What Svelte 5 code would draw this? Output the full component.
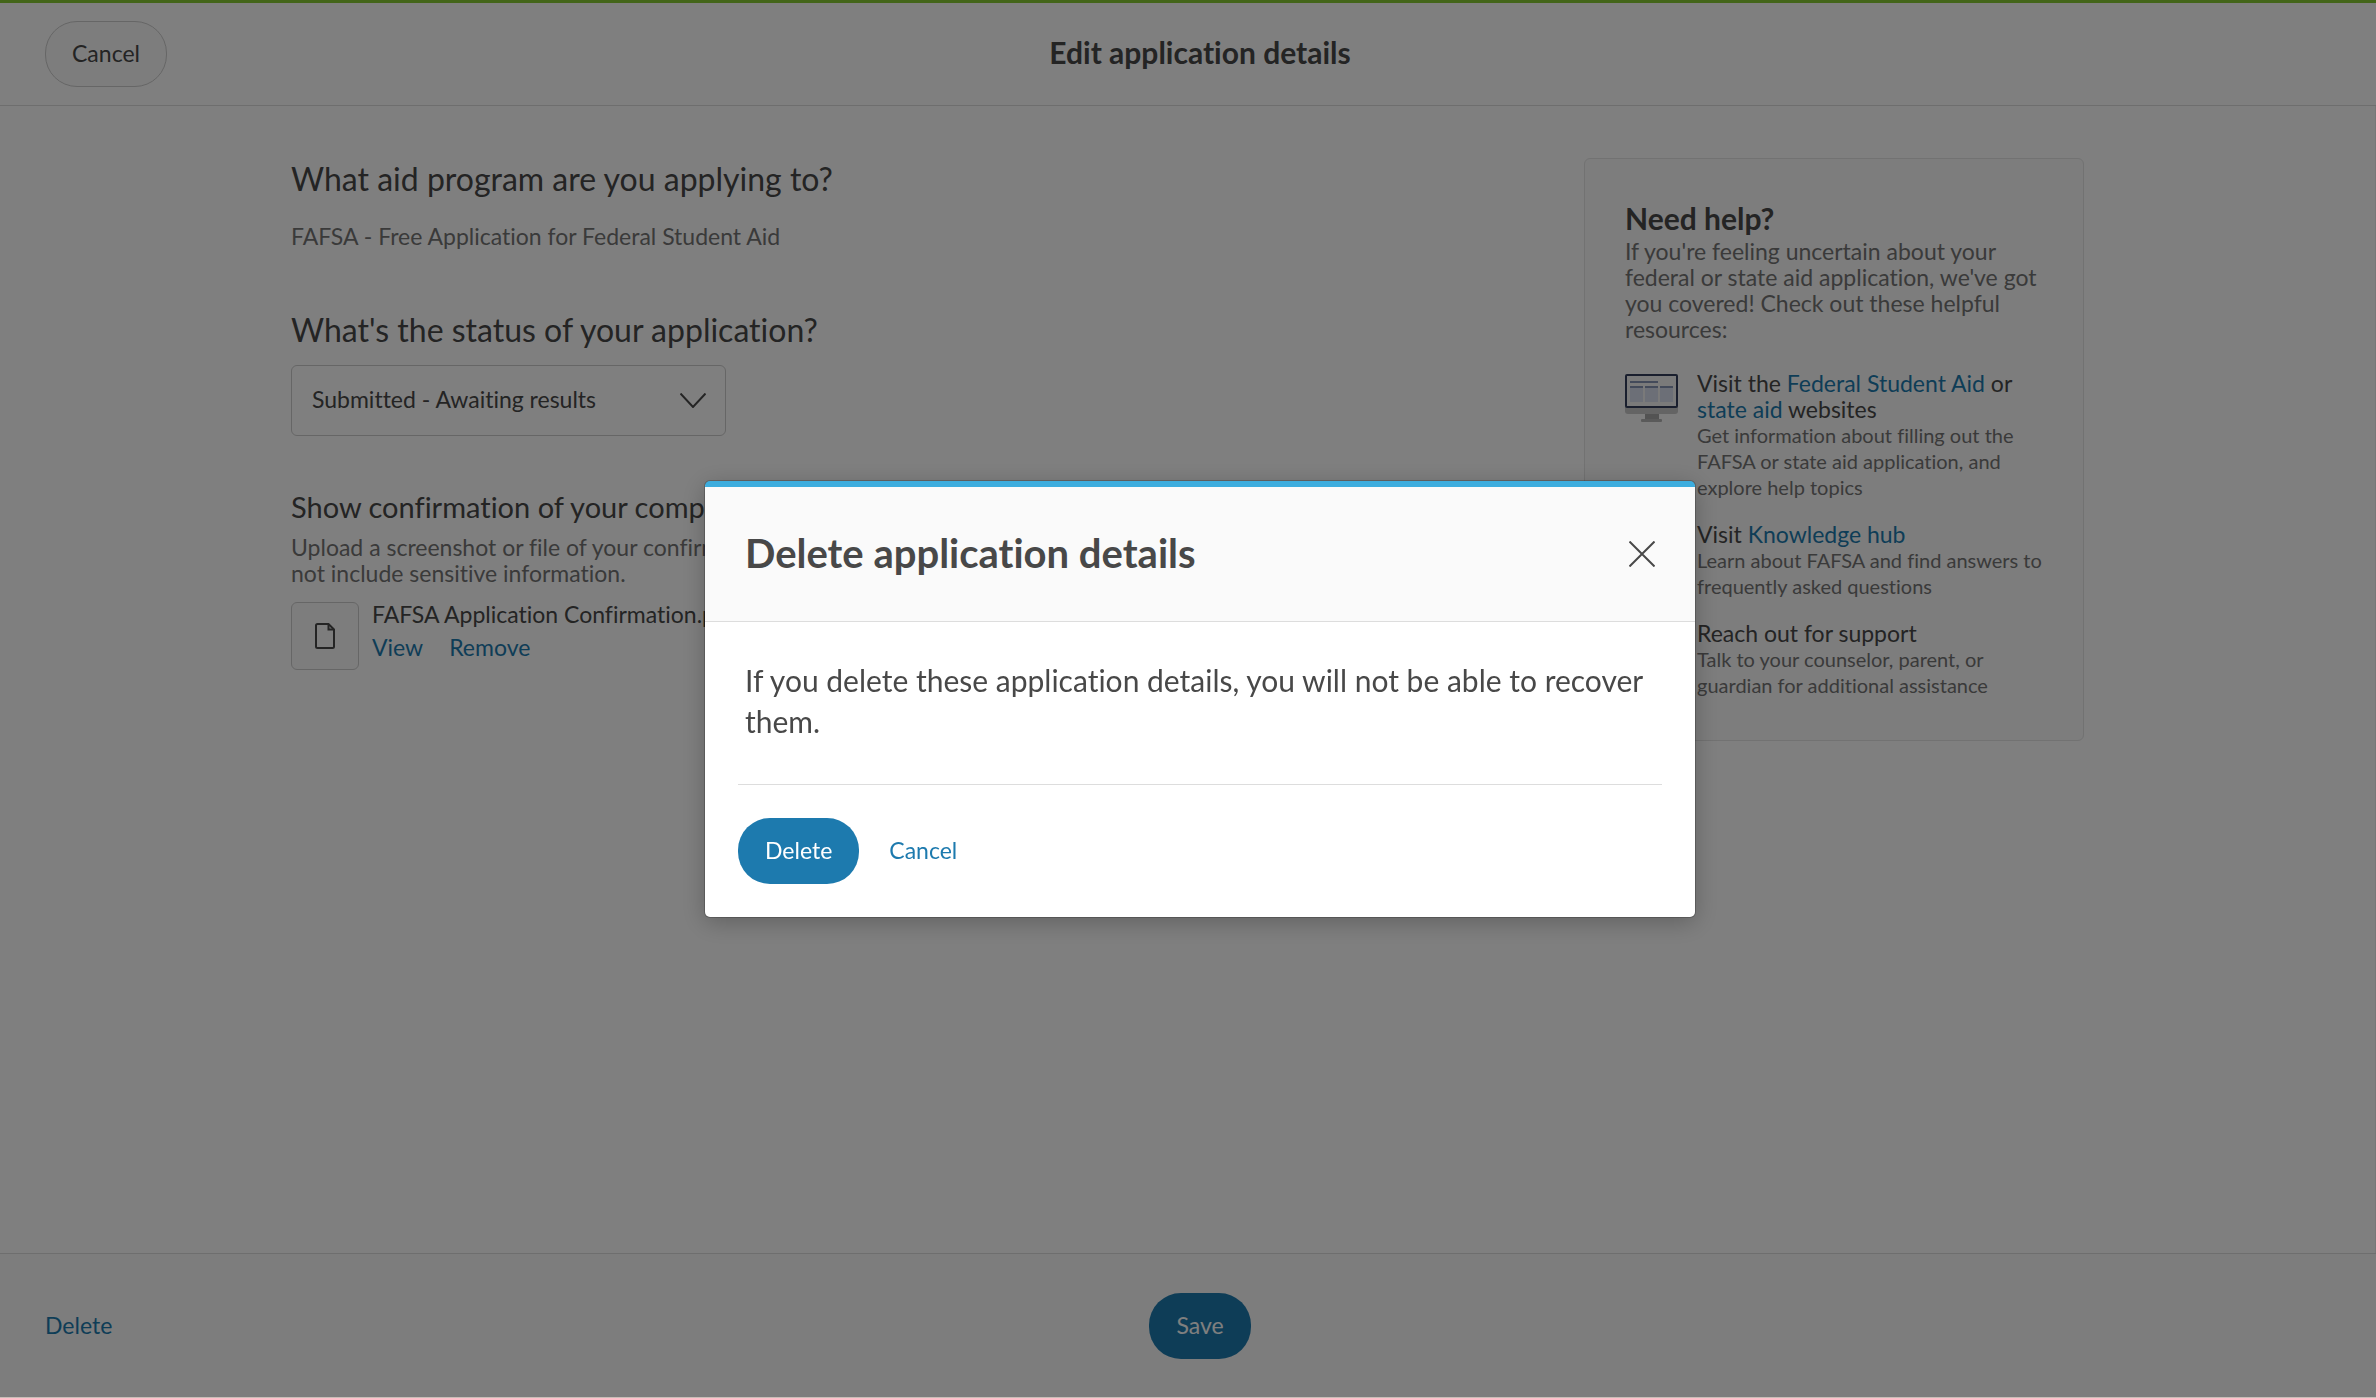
<script lang="ts">
	let status = 'submitted';
	let modalOpen = true;

	const statuses = [
		{ value: 'not-started', label: 'Not started' },
		{ value: 'in-progress', label: 'In progress' },
		{ value: 'submitted', label: 'Submitted - Awaiting results' },
		{ value: 'complete', label: 'Complete' }
	];

	function openModal() {
		modalOpen = true;
	}

	function closeModal() {
		modalOpen = false;
	}
</script>

<div class="page">
	<header class="top-bar">
		<button class="btn btn-outline" type="button">Cancel</button>
		<h1>Edit application details</h1>
	</header>

	<main>
		<div class="content">
			<div class="form">
				<section>
					<h2>What aid program are you applying to?</h2>
					<p class="program">FAFSA - Free Application for Federal Student Aid</p>
				</section>

				<section class="status">
					<label for="status">What's the status of your application?</label>
					<div class="select">
						<select id="status" bind:value={status}>
							{#each statuses as option}
								<option value={option.value}>{option.label}</option>
							{/each}
						</select>
						<svg class="chevron" viewBox="0 0 26 15" aria-hidden="true">
							<path d="M0.5 0.5 L13 14 L25.5 0.5" />
						</svg>
					</div>
				</section>

				<section class="confirmation">
					<h2>Show confirmation of your completed application</h2>
					<p class="hint">
						Upload a screenshot or file of your confirmation. Please do<br />
						not include sensitive information.
					</p>
					<div class="file">
						<div class="file-thumb">
							<svg viewBox="0 0 20 26" aria-hidden="true">
								<path d="M13.5 1 H2.5 Q1 1 1 2.5 V23.5 Q1 25 2.5 25 H17.5 Q19 25 19 23.5 V6.5 Z" />
								<path d="M13.5 1 V6.5 H19" />
							</svg>
						</div>
						<div class="file-info">
							<div class="file-name">FAFSA Application Confirmation.png</div>
							<div class="file-actions">
								<a href="#view">View</a>
								<a href="#remove">Remove</a>
							</div>
						</div>
					</div>
				</section>
			</div>

			<aside>
				<h3>Need help?</h3>
				<p class="intro">
					If you're feeling uncertain about your federal or state aid application, we've got you
					covered! Check out these helpful resources:
				</p>
				<ul>
					<li>
						<svg class="monitor" viewBox="0 0 53 48" aria-hidden="true">
							<path d="M0 32 H53 V37 Q53 40 50 40 H3 Q0 40 0 37 Z" fill="#c8c8c8" />
							<rect x="20" y="40" width="14" height="6" fill="#a6a6a6" />
							<rect x="16" y="45" width="21" height="3" rx="1" fill="#b4b4b4" />
							<rect width="53" height="34" rx="2" fill="#343f5c" />
							<rect x="2" y="2" width="49" height="30" fill="#f4f4f4" />
							<rect x="5" y="7" width="28" height="2" fill="#8794b4" />
							<rect x="5" y="12" width="13" height="16" fill="#d9deee" />
							<rect x="20" y="12" width="13" height="16" fill="#d9deee" />
							<rect x="35" y="12" width="13" height="16" fill="#d9deee" />
							<path d="M5 13 H18 M20 13 H33 M35 13 H48" stroke="#8794b4" stroke-width="2" />
						</svg>
						<div class="resource">
							<h4>
								Visit the <a href="#federal">Federal Student Aid</a> or
								<a href="#state">state aid</a> websites
							</h4>
							<p>Get information about filling out the FAFSA or state aid application, and explore help topics</p>
						</div>
					</li>
					<li>
						<div class="resource">
							<h4>Visit <a href="#hub">Knowledge hub</a></h4>
							<p>Learn about FAFSA and find answers to frequently asked questions</p>
						</div>
					</li>
					<li>
						<div class="resource">
							<h4>Reach out for support</h4>
							<p>Talk to your counselor, parent, or guardian for additional assistance</p>
						</div>
					</li>
				</ul>
			</aside>
		</div>
	</main>

	<footer>
		<button class="link" type="button" on:click={openModal}>Delete</button>
		<button class="btn btn-primary" type="button">Save</button>
	</footer>
</div>

{#if modalOpen}
	<div class="backdrop">
		<div class="modal" role="dialog" aria-modal="true" aria-labelledby="modal-title">
			<div class="modal-header">
				<h2 id="modal-title">Delete application details</h2>
				<button class="close" type="button" aria-label="Close" on:click={closeModal}>
					<svg viewBox="0 0 26 26" aria-hidden="true">
						<path d="M0.5 0.5 L25.5 25.5 M25.5 0.5 L0.5 25.5" />
					</svg>
				</button>
			</div>
			<div class="modal-body">
				<p>If you delete these application details, you will not be able to recover them.</p>
				<div class="modal-actions">
					<button class="btn btn-primary" type="button" on:click={closeModal}>Delete</button>
					<button class="link" type="button" on:click={closeModal}>Cancel</button>
				</div>
			</div>
		</div>
	</div>
{/if}

<style>
	:global(body) {
		margin: 0;
		background: #c8beb8;
		font-family: Lato, 'Open Sans', sans-serif;
		font-size: 23px;
		line-height: 26px;
		font-variant-ligatures: none;
		color: #484848;
	}

	* {
		box-sizing: border-box;
	}

	h1,
	h2,
	h3,
	h4,
	p,
	ul {
		margin: 0;
		padding: 0;
	}

	a {
		color: #1d7aae;
		text-decoration: none;
	}

	button,
	select {
		font: inherit;
		font-variant-ligatures: none;
		color: inherit;
	}

	button {
		cursor: pointer;
	}

	.page {
		display: flex;
		flex-direction: column;
		min-height: calc(100vh - 1px);
		background: #fff;
	}

	/* Buttons */
	.btn {
		height: 66px;
		padding: 0 26px 2px;
		border: 1px solid transparent;
		border-radius: 32px;
	}

	.btn-outline {
		background: #fafafa;
		border-color: #ccc;
	}

	.btn-primary {
		background: #1d7aae;
		color: #fff;
	}

	.link {
		padding: 0 0 2px;
		border: 0;
		background: none;
		color: #1d7aae;
	}

	/* Header and footer */
	.top-bar,
	footer {
		display: grid;
		grid-template-columns: 1fr auto 1fr;
		align-items: center;
		justify-items: start;
		padding: 0 21px 0 45px;
	}

	.top-bar {
		height: 106px;
		border-top: 3px solid #87cb33;
		border-bottom: 1px solid #ddd;
	}

	h1 {
		padding-bottom: 4px;
		font-size: 30px;
		line-height: 36px;
		font-weight: 700;
	}

	footer {
		height: 144px;
		background: #fafafa;
		border-top: 1px solid #ddd;
	}

	/* Form */
	main {
		flex: 1;
		padding: 52px 45px;
		border-right: 1px solid #eee;
	}

	.content {
		display: flex;
		justify-content: space-between;
		align-items: flex-start;
		max-width: 1793px;
		margin: 0 auto;
	}

	.form h2,
	.form label {
		display: block;
		font-size: 32px;
		line-height: 42px;
		font-weight: 400;
	}

	.program {
		margin-top: 23px;
		color: #757575;
	}

	.status {
		margin-top: 60px;
	}

	.select {
		position: relative;
		width: 435px;
		margin-top: 14px;
	}

	select {
		display: block;
		width: 100%;
		height: 71px;
		padding: 0 60px 3px 20px;
		border: 1px solid #ccc;
		border-radius: 6px;
		background: #fff;
		appearance: none;
	}

	.chevron {
		position: absolute;
		top: 28px;
		right: 20px;
		width: 26px;
		height: 15px;
		pointer-events: none;
	}

	svg path:not([fill]):not([stroke]) {
		fill: none;
		stroke: #484848;
		stroke-width: 2;
	}

	.confirmation {
		margin-top: 50px;
	}

	.confirmation h2 {
		font-size: 29px;
	}

	.hint {
		margin-top: 6px;
		color: #757575;
	}

	.file {
		display: flex;
		gap: 13px;
		margin-top: 16px;
		line-height: 24px;
	}

	.file-thumb {
		display: flex;
		align-items: center;
		justify-content: center;
		width: 68px;
		height: 68px;
		border: 1px solid #ccc;
		border-radius: 6px;
		background: #fafafa;
	}

	.file-thumb svg {
		width: 20px;
		height: 26px;
	}

	.file-actions {
		display: flex;
		gap: 26px;
		margin-top: 9px;
	}

	/* Help panel */
	aside {
		width: 500px;
		flex-shrink: 0;
		padding: 43px 40px 42px;
		border: 1px solid #e4e4e4;
		border-radius: 6px;
		background: #fafafa;
	}

	h3 {
		font-size: 30px;
		line-height: 32px;
		font-weight: 700;
	}

	.intro {
		margin-top: 4px;
		color: #757575;
	}

	ul {
		display: flex;
		flex-direction: column;
		gap: 21px;
		margin-top: 28px;
		list-style: none;
	}

	li {
		display: grid;
		grid-template-columns: 53px 1fr;
		column-gap: 19px;
		align-items: start;
	}

	.monitor {
		width: 53px;
		height: 48px;
		margin-top: 4px;
	}

	.resource {
		grid-column: 2;
	}

	h4 {
		font-size: 23px;
		font-weight: 400;
	}

	.resource p {
		font-size: 20px;
		color: #757575;
	}

	/* Modal */
	.backdrop {
		position: fixed;
		inset: 0 0 1px;
		display: flex;
		align-items: center;
		justify-content: center;
		padding-left: 24px;
		background: rgba(0, 0, 0, 0.5);
	}

	.modal {
		width: 990px;
		overflow: hidden;
		border-top: 6px solid #3dadde;
		border-radius: 5px;
		background: #fff;
		box-shadow:
			0 0 0 1px rgba(0, 0, 0, 0.2),
			0 5px 24px rgba(0, 0, 0, 0.25);
	}

	.modal-header {
		display: flex;
		align-items: center;
		justify-content: space-between;
		height: 135px;
		padding: 0 40px;
		background: #fafafa;
		border-bottom: 1px solid #ddd;
	}

	.modal-header h2 {
		padding-bottom: 2px;
		font-size: 40px;
		line-height: 44px;
		font-weight: 700;
	}

	.close {
		padding: 0;
		border: 0;
		background: none;
	}

	.close svg {
		display: block;
		width: 26px;
		height: 26px;
	}

	.modal-body {
		padding: 38px 33px 33px;
	}

	.modal-body p {
		padding: 0 7px;
		font-size: 30px;
		line-height: 41px;
	}

	.modal-actions {
		display: flex;
		align-items: center;
		gap: 30px;
		margin-top: 42px;
		padding-top: 33px;
		border-top: 1px solid #ddd;
	}
</style>
